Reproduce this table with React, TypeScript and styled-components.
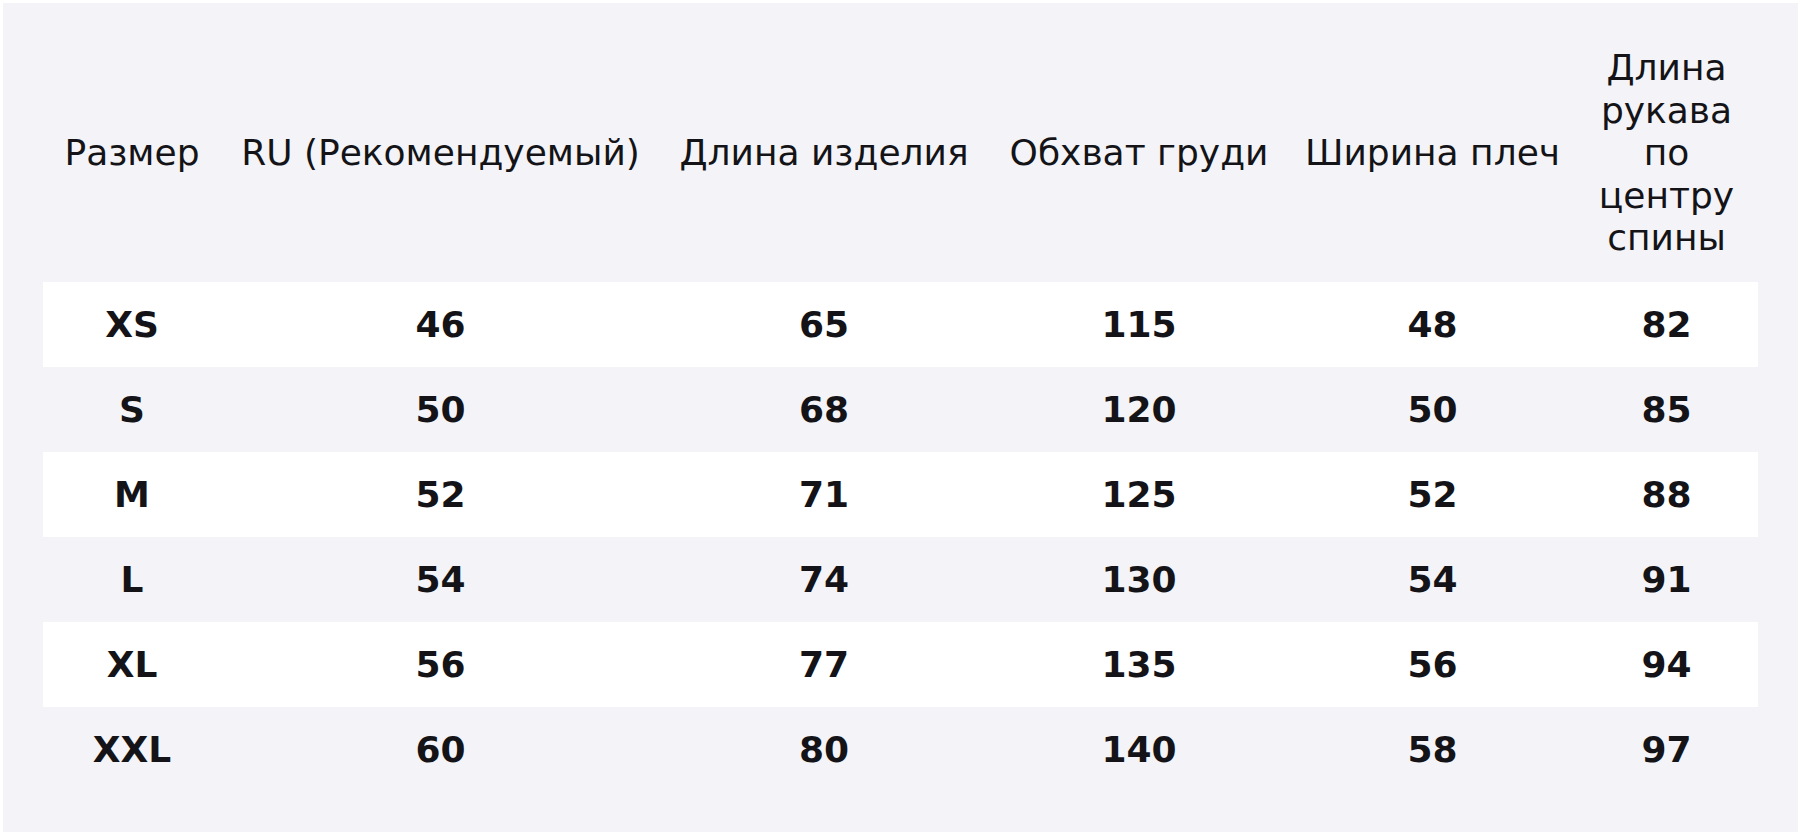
import styled, { createGlobalStyle } from "styled-components";

const GlobalStyle = createGlobalStyle`
  html, body {
    margin: 0;
    padding: 0;
    background: #ffffff;
  }
  body {
    font-family: "DejaVu Sans", "Noto Sans", sans-serif;
    color: #141418;
  }
`;

const columns = "178px 439px 328px 302px 285px 183px";

const sizes = [
  { size: "XS", ru: 46, length: 65, chest: 115, shoulders: 48, sleeve: 82 },
  { size: "S", ru: 50, length: 68, chest: 120, shoulders: 50, sleeve: 85 },
  { size: "M", ru: 52, length: 71, chest: 125, shoulders: 52, sleeve: 88 },
  { size: "L", ru: 54, length: 74, chest: 130, shoulders: 54, sleeve: 91 },
  { size: "XL", ru: 56, length: 77, chest: 135, shoulders: 56, sleeve: 94 },
  { size: "XXL", ru: 60, length: 80, chest: 140, shoulders: 58, sleeve: 97 }
];

const headers = [
  { title: "Размер" },
  { title: "RU (Рекомендуемый)" },
  { title: "Длина изделия" },
  { title: "Обхват груди" },
  { title: "Ширина плеч" },
  { title: "Длина рукава по центру спины", wrap: true }
];

const Panel = styled.section`
  margin: 3px 3px 4px;
  background: #f4f4f8;
  padding: 24px 40px 40px;
`;

const Table = styled.div`
  display: flex;
  flex-direction: column;
`;

const Row = styled.div<{ $white?: boolean }>`
  display: grid;
  grid-template-columns: ${columns};
  background: ${props => (props.$white ? "#ffffff" : "transparent")};
`;

const HeadCell = styled.div<{ $wrap?: boolean }>`
  display: flex;
  align-items: center;
  justify-content: center;
  text-align: center;
  padding: 20px 19px 22px;
  font-size: 36px;
  line-height: 42.5px;
  font-weight: 400;
  white-space: ${props => (props.$wrap ? "normal" : "nowrap")};
`;

const Cell = styled.div`
  text-align: center;
  padding: 20px 22px;
  font-size: 36px;
  line-height: 1.25;
  font-weight: 700;
`;

const App = () => (
  <>
    <GlobalStyle />
    <Panel>
      <Table>
        <Row>
          {headers.map(head => (
            <HeadCell key={head.title} $wrap={head.wrap}>
              {head.title}
            </HeadCell>
          ))}
        </Row>
        {sizes.map((item, index) => (
          <Row key={item.size} $white={index % 2 === 0}>
            <Cell>{item.size}</Cell>
            <Cell>{item.ru}</Cell>
            <Cell>{item.length}</Cell>
            <Cell>{item.chest}</Cell>
            <Cell>{item.shoulders}</Cell>
            <Cell>{item.sleeve}</Cell>
          </Row>
        ))}
      </Table>
    </Panel>
  </>
);

export default App;
